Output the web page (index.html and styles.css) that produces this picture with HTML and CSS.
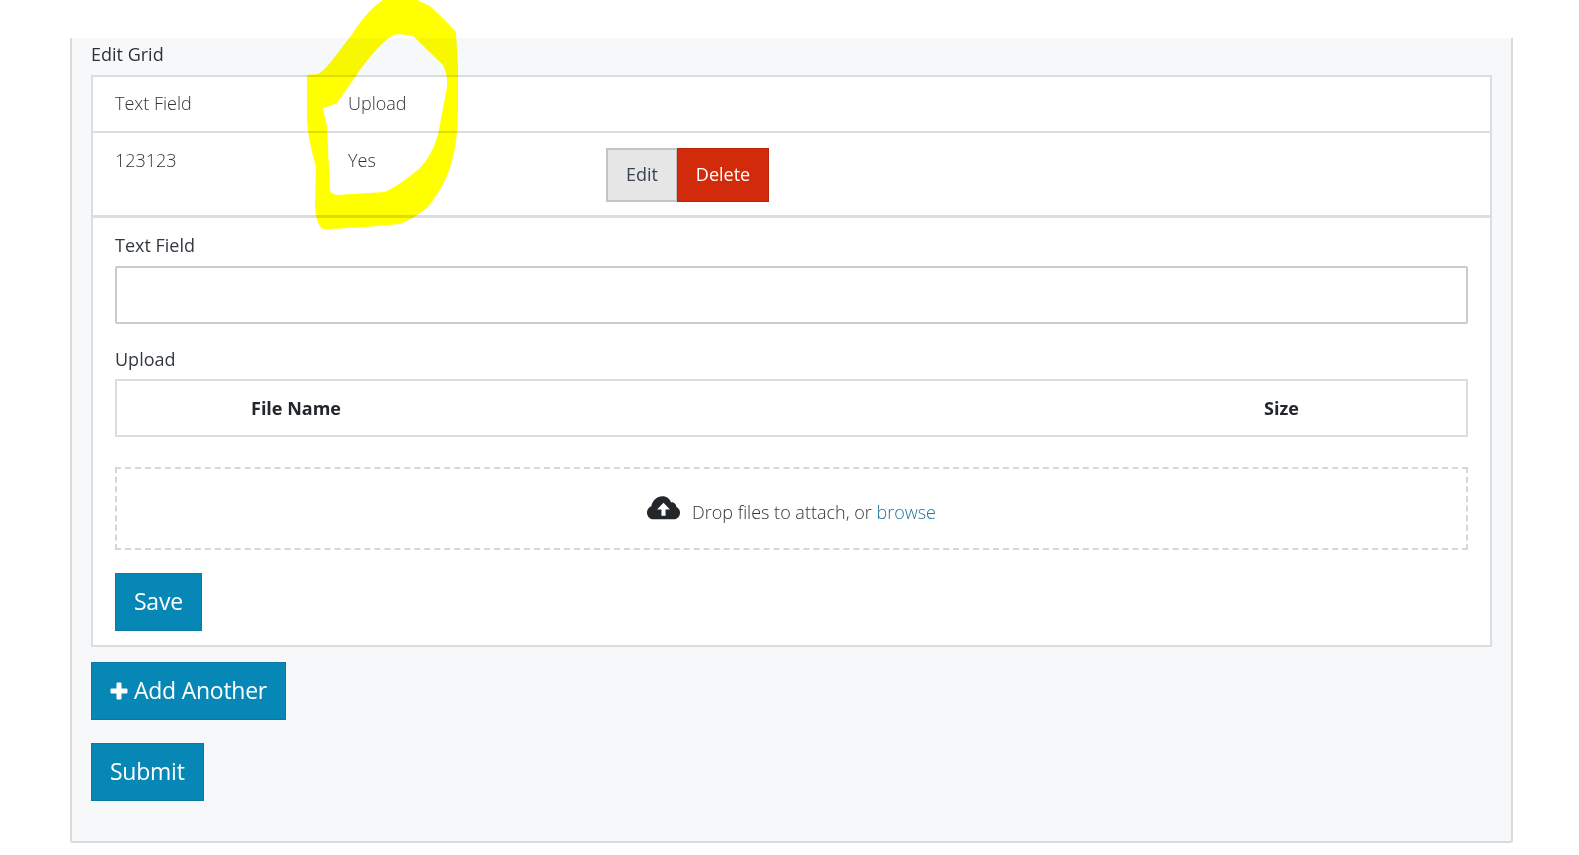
FILE: index.html
```html
<!DOCTYPE html>
<html lang="en">
<head>
<meta charset="utf-8">
<title>Edit Grid</title>
<link rel="stylesheet" href="styles.css">
</head>
<body>
<main class="panel">
  <div class="grid-label">Edit Grid</div>
  <section class="grid">
    <div class="row row-head">
      <span>Text Field</span>
      <span>Upload</span>
    </div>
    <div class="row row-data">
      <span>123123</span>
      <span>Yes</span>
      <div class="actions">
        <button class="btn-edit" type="button">Edit</button>
        <button class="btn-delete" type="button">Delete</button>
      </div>
    </div>
    <form class="editor">
      <label class="field-label label-text">Text Field</label>
      <input class="text-input" type="text">
      <label class="field-label label-upload">Upload</label>
      <div class="file-table">
        <span class="col-name">File Name</span>
        <span class="col-size">Size</span>
      </div>
      <div class="dropzone">
        <svg class="cloud" viewBox="0 0 32 24" aria-hidden="true"><path fill-rule="evenodd" d="M15 0c4 0 7.300 2.600 8.300 6.200C24 6 24.800 5.900 25.500 6.300c1.900.7 3 2.500 2.900 4.300 2.200.9 3.600 3 3.600 5.400 0 3.800-2.900 6.500-6.500 6.500H6.500C2.900 22.500 0 19.600 0 16c0-2.800 1.700-5.200 4.200-6.100C5 4.200 9.500 0 15 0ZM16 6.500 9.800 13H14v6h4v-6h4.200L16 6.500Z"/></svg>
        <span class="drop-text">Drop files to attach, or <a class="browse" href="#">browse</a></span>
      </div>
      <button class="btn-primary btn-save" type="button">Save</button>
    </form>
  </section>
  <button class="btn-primary btn-add" type="button"><svg class="plus" viewBox="0 0 18 18" aria-hidden="true"><path d="M6.500 1.500a1 1 0 0 1 1-1h3a1 1 0 0 1 1 1v5h5a1 1 0 0 1 1 1v3a1 1 0 0 1-1 1h-5v5a1 1 0 0 1-1 1h-3a1 1 0 0 1-1-1v-5h-5a1 1 0 0 1-1-1v-3a1 1 0 0 1 1-1h5v-5Z"/></svg>Add Another</button>
  <button class="btn-primary btn-submit" type="button">Submit</button>
</main>
<svg class="highlight" viewBox="0 0 1579 855" aria-hidden="true"><path fill-rule="evenodd" d="M383 0 375 6Q362 18 353 33 340 50 330 63 322 72 318 74L307 75 307 120Q308 140 316 167L315 205Q316 225 323 229 345 229 400 224 415 218 428 207 445 185 451 165 458 140 458 110L458 67 456 32Q445 20 430 6L417 0ZM393 35Q400 33 413 36L443 65Q448 75 447 87L438 135Q432 155 420 168 400 185 385 192L337 195Q331 194 330 190 328 150 327 127L323 108Q330 106 337 103L360 70Q378 45 393 35Z"/></svg>
</body>
</html>
```

FILE: styles.css
```css
* { box-sizing: border-box; }
html, body { margin: 0; height: 855px; overflow: hidden; background: #fff; }
body {
  position: relative;
  padding-top: 38px;
  font-family: "Open Sans", "Liberation Sans", sans-serif;
  font-size: 18px;
  color: #2d3238;
}
.panel {
  margin-left: 70px;
  width: 1443px;
  height: 805px;
  padding: 0 20px 0 19px;
  background: #f7f8fa;
  border: 2px solid #d8dadc;
  border-top: 0;
  border-radius: 0 0 3px 3px;
  display: flex;
  flex-direction: column;
  align-items: flex-start;
}
.grid-label { height: 37px; line-height: 32px; font-size: 18px; }
.grid {
  width: 1401px;
  height: 572px;
  background: #fff;
  border: 2px solid #dcdddf;
  display: flex;
  flex-direction: column;
}
.row {
  display: grid;
  grid-template-columns: 233px 258px 1fr;
  padding-left: 22px;
  font-weight: 300;
  color: #2f343a;
  border-bottom: 2px solid #dcdddf;
}
.row-head { height: 56px; line-height: 52px; }
.row-data { height: 85px; border-bottom-width: 3px; line-height: 55px; }
.actions { display: flex; padding-top: 15px; }
.actions button {
  height: 54px;
  font-family: inherit;
  font-size: 18px;
  padding: 0 0 2px;
  border-radius: 0;
}
.btn-edit { width: 71px; background: #e6e6e6; border: 2px solid #c4c4c4; border-right-width: 1px; color: #3a4450; }
.btn-delete { width: 92px; background: #d22b0b; border: 1px solid #b8260a; color: #fff; }
.editor {
  flex: 1;
  padding: 0 22px;
  display: flex;
  flex-direction: column;
  align-items: flex-start;
}
.field-label { display: block; font-size: 18px; color: #33383e; line-height: 24px; }
.label-text { margin-top: 15px; }
.text-input {
  display: block;
  width: 1353px;
  height: 58px;
  margin-top: 9px;
  background: #fff;
  border: 2px solid #c9cbcd;
  border-radius: 2px;
}
.label-upload { margin-top: 23px; }
.file-table {
  width: 1353px;
  height: 58px;
  margin-top: 8px;
  border: 2px solid #dcdddf;
  display: flex;
  align-items: center;
  font-weight: 700;
  color: #23272c;
}
.col-name { margin-left: 134px; }
.col-size { margin-left: 923px; }
.dropzone {
  width: 1353px;
  height: 83px;
  margin-top: 30px;
  border: 2px dashed #d4d6d8;
  display: flex;
  align-items: center;
  justify-content: center;
}
.cloud { width: 33px; height: 25px; fill: #23272c; margin: 0 12px 1px 0; }
.drop-text { font-weight: 300; color: #2f343a; padding-top: 7px; }
.browse { color: #22759a; text-decoration: none; }
.btn-primary {
  display: flex;
  align-items: center;
  height: 58px;
  padding: 0 18px 2px;
  background: #0787b6;
  border: 1px solid #0a7aa5;
  border-radius: 0;
  color: #fff;
  font-family: inherit;
  font-size: 23px;
  letter-spacing: -0.25px;
}
.btn-save { margin-top: 23px; }
.btn-add { margin-top: 15px; }
.btn-submit { margin-top: 23px; }
.plus { width: 18px; height: 18px; fill: #fff; margin: 2px 6px 0 0; }
.highlight {
  position: absolute;
  left: 0;
  top: 0;
  width: 1579px;
  height: 855px;
  pointer-events: none;
  mix-blend-mode: multiply;
  fill: #ffff00;
}
```
